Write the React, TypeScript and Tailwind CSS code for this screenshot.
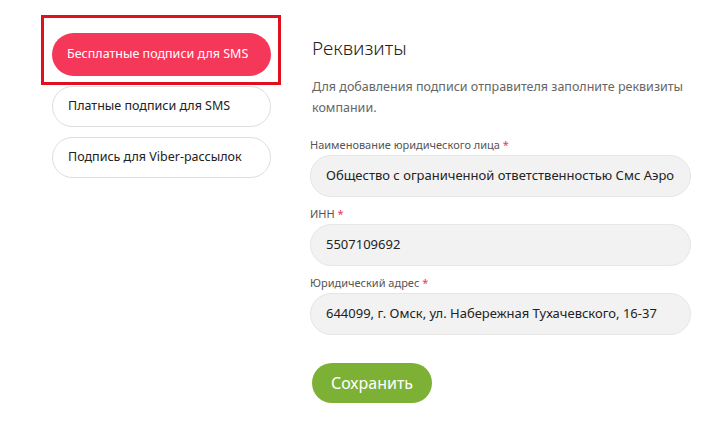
export default function App() {
  const font = { fontFamily: '"Noto Sans", "Open Sans", sans-serif' };
  const Field = ({ label, value }: { label: string; value: string }) => (
    <div className="mb-[10px]">
      <div className="text-[11px] text-[#555] mb-[3px] leading-[14px]">
        {label} <span className="text-[#e8355a]">*</span>
      </div>
      <div className="h-[42px] w-[381px] rounded-full bg-[#f2f2f2] border border-[#e6e6e6] flex items-center px-[15px] text-[13px] text-[#222] whitespace-nowrap">
        {value}
      </div>
    </div>
  );
  return (
    <div className="w-[709px] h-[426px] bg-white flex" style={font}>
      <div className="w-[310px] pl-[41px] pt-[15px] flex flex-col">
        <div className="w-[240px] h-[70px] border-[3px] border-[#e0101e] pl-[8px] pt-[15px]">
          <div className="w-[219px] h-[43px] rounded-full bg-[#f5375a] text-white text-[12.5px] flex items-center pl-[15px]">
            Бесплатные подписи для SMS
          </div>
        </div>
        <div className="ml-[11px] mt-[1px] w-[219px] h-[41px] rounded-full border border-[#ddd] text-[12.5px] text-[#222] flex items-center pl-[15px]">
          Платные подписи для SMS
        </div>
        <div className="ml-[11px] mt-[10px] w-[219px] h-[41px] rounded-full border border-[#ddd] text-[12.5px] text-[#222] flex items-center pl-[15px]">
          Подпись для Viber-рассылок
        </div>
      </div>
      <div className="pt-[35px]">
        <div className="text-[19px] font-light text-[#222] leading-[26px] pl-[2px]">Реквизиты</div>
        <div className="mt-[15px] text-[12.5px] text-[#666] leading-[21px] w-[390px] pl-[2px]">
          Для добавления подписи отправителя заполните реквизиты компании.
        </div>
        <div className="mt-[20px]">
          <Field label="Наименование юридического лица" value="Общество с ограниченной ответственностью Смс Аэро" />
          <Field label="ИНН" value="5507109692" />
          <Field label="Юридический адрес" value="644099, г. Омск, ул. Набережная Тухачевского, 16-37" />
        </div>
        <button className="mt-[18px] ml-[2px] w-[120px] h-[40px] rounded-full bg-[#7cb135] text-white text-[16px]">
          Сохранить
        </button>
      </div>
    </div>
  );
}
